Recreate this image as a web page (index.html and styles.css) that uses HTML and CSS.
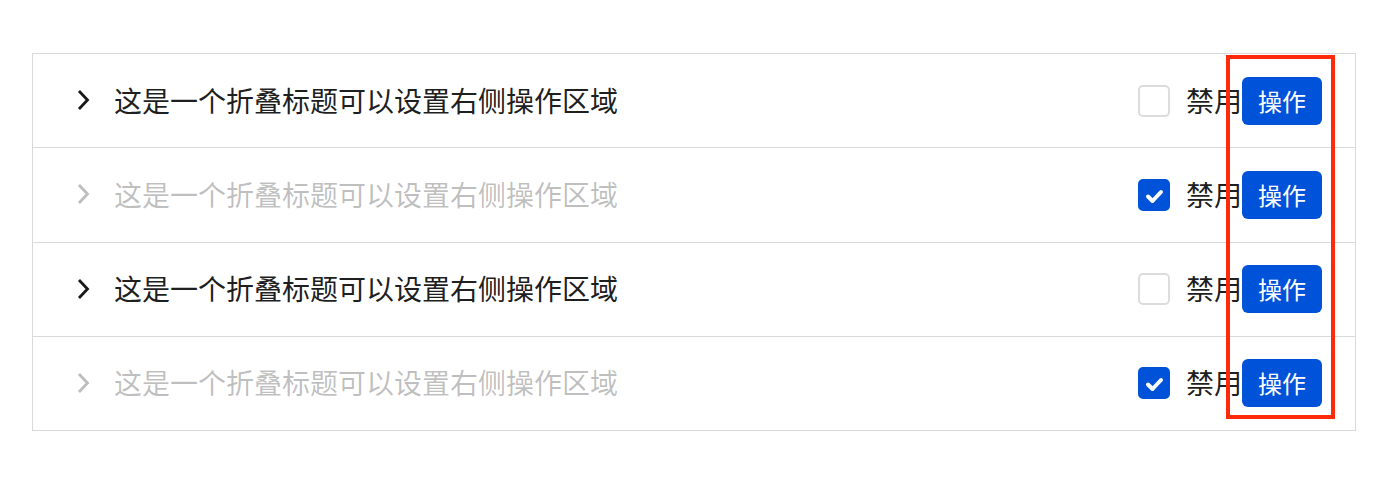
FILE: index.html
```html
<!DOCTYPE html>
<html lang="zh">
<head>
<meta charset="utf-8">
<link rel="stylesheet" href="styles.css">
</head>
<body>
<div class="page">
  <div class="collapse">
    <div class="row">
      <svg class="arrow" viewBox="0 0 32 32"><path d="M13 7 L21.5 16 L13 25" fill="none" stroke="currentColor" stroke-width="2.8"/></svg>
      <span class="title">这是一个折叠标题可以设置右侧操作区域</span>
      <div class="actions">
        <span class="box"></span>
        <span class="label">禁用</span>
        <button class="btn">操作</button>
      </div>
    </div>
    <div class="row disabled">
      <svg class="arrow" viewBox="0 0 32 32"><path d="M13 7 L21.5 16 L13 25" fill="none" stroke="currentColor" stroke-width="2.8"/></svg>
      <span class="title">这是一个折叠标题可以设置右侧操作区域</span>
      <div class="actions">
        <span class="box checked"><svg viewBox="0 0 28 28"><path d="M8 15.5 L12.5 20 L21 11" fill="none" stroke="#fff" stroke-width="4" stroke-linecap="round" stroke-linejoin="round"/></svg></span>
        <span class="label">禁用</span>
        <button class="btn">操作</button>
      </div>
    </div>
    <div class="row">
      <svg class="arrow" viewBox="0 0 32 32"><path d="M13 7 L21.5 16 L13 25" fill="none" stroke="currentColor" stroke-width="2.8"/></svg>
      <span class="title">这是一个折叠标题可以设置右侧操作区域</span>
      <div class="actions">
        <span class="box"></span>
        <span class="label">禁用</span>
        <button class="btn">操作</button>
      </div>
    </div>
    <div class="row disabled last">
      <svg class="arrow" viewBox="0 0 32 32"><path d="M13 7 L21.5 16 L13 25" fill="none" stroke="currentColor" stroke-width="2.8"/></svg>
      <span class="title">这是一个折叠标题可以设置右侧操作区域</span>
      <div class="actions">
        <span class="box checked"><svg viewBox="0 0 28 28"><path d="M8 15.5 L12.5 20 L21 11" fill="none" stroke="#fff" stroke-width="4" stroke-linecap="round" stroke-linejoin="round"/></svg></span>
        <span class="label">禁用</span>
        <button class="btn">操作</button>
      </div>
    </div>
    <div class="highlight"></div>
  </div>
</div>
</body>
</html>
```

FILE: styles.css
```css
html, body {
  margin: 0;
  padding: 0;
  background: #fff;
}
body {
  font-family: "Noto Sans CJK SC", "Noto Sans", sans-serif;
  color: rgba(0, 0, 0, 0.9);
}
.page {
  padding: 53px 40px 0 32px;
}
.collapse {
  position: relative;
  width: 1322px;
  border: 1px solid #d9d9d9;
}
.row {
  display: flex;
  align-items: center;
  height: 93.25px;
  padding: 0 33px 0 33px;
  border-bottom: 1px solid #d9d9d9;
}
.row.last {
  border-bottom: none;
}
.arrow {
  width: 32px;
  height: 32px;
  color: rgba(0, 0, 0, 0.9);
  margin-right: 16px;
  margin-top: -1px;
  flex: none;
}
.title {
  font-size: 28px;
  line-height: 40px;
  flex: 1;
  margin-top: -2px;
}
.disabled .title,
.disabled .arrow {
  color: rgba(0, 0, 0, 0.26);
}
.actions {
  display: flex;
  align-items: center;
}
.box {
  width: 28px;
  height: 28px;
  border: 2px solid #dcdcdc;
  border-radius: 5px;
  box-sizing: content-box;
  margin-right: 16px;
  display: flex;
}
.box.checked {
  background: #0052d9;
  border-color: #0052d9;
}
.box svg {
  width: 28px;
  height: 28px;
}
.label {
  font-size: 28px;
  line-height: 40px;
  margin-top: -2px;
}
.btn {
  width: 80px;
  height: 48px;
  border: none;
  border-radius: 6px;
  background: #0052d9;
  color: #fff;
  font-family: "Noto Sans CJK SC", "Noto Sans", sans-serif;
  font-size: 24px;
  line-height: 48px;
  padding: 0;
  margin: 0;
}
.highlight {
  position: absolute;
  left: 1193px;
  top: 1px;
  width: 101px;
  height: 356px;
  border: 4px solid #ff2a0a;
}
```
